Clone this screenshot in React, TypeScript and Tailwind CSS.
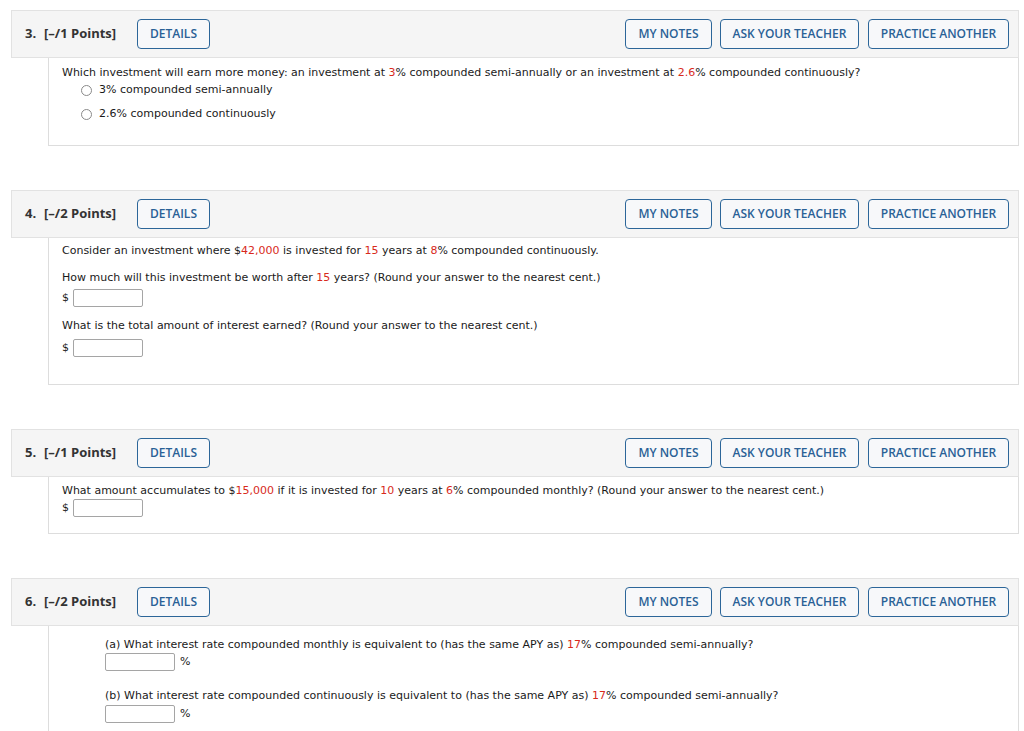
import React from "react";

const R = ({ children }: { children: React.ReactNode }) => (
  <span className="text-[#d8291c]">{children}</span>
);

const Btn = ({ label, w, className = "" }: { label: string; w: string; className?: string }) => (
  <button
    className={`${w} ${className} h-[30px] flex items-center justify-center rounded-[4px] border-[1.5px] border-[#2c6699] bg-[#f7f8fa] text-[#2a6196] text-[12px] font-semibold tracking-[0px] [font-family:'Open_Sans',sans-serif]`}
  >
    {label}
  </button>
);

const Header = ({ num, pts }: { num: string; pts: string }) => (
  <div className="h-[48px] border border-[#e2e2e2] bg-[#f5f5f5] flex items-center pl-[13px] pr-[9px]">
    <span className="[font-family:'Open_Sans',sans-serif] font-bold text-[13px] text-[#333] w-[19px]">{num}.</span>
    <span className="[font-family:'Open_Sans',sans-serif] font-bold text-[13px] text-[#333] w-[93px]">[–/{pts} Points]</span>
    <Btn label="DETAILS" w="w-[73px]" />
    <div className="flex-1" />
    <Btn label="MY NOTES" w="w-[87px]" />
    <Btn label="ASK YOUR TEACHER" w="w-[139px]" className="ml-[8px]" />
    <Btn label="PRACTICE ANOTHER" w="w-[141px]" className="ml-[9px]" />
  </div>
);

const Body = ({ className = "", children }: { className?: string; children: React.ReactNode }) => (
  <div
    className={`ml-[37px] border-x border-b border-[#dddddd] bg-white pl-[13px] text-[11px] leading-[16px] text-[#1a1a1a] [font-family:'DejaVu_Sans',Verdana,sans-serif] ${className}`}
  >
    {children}
  </div>
);

const Input = ({ w = "w-[70px]" }: { w?: string }) => (
  <span className={`inline-block ${w} h-[18px] border border-[#a5a5a5] rounded-[2px] bg-white align-middle`} />
);

const Radio = ({ label, className = "" }: { label: string; className?: string }) => (
  <div className={`flex items-center h-[18px] pl-[19px] ${className}`}>
    <span className="w-[11px] h-[11px] rounded-full border border-[#8a8a8a] bg-white" />
    <span className="ml-[7px]">{label}</span>
  </div>
);

export default function App() {
  return (
    <div className="w-[1024px] min-h-[731px] bg-white pt-[10px] pl-[11px] pr-[5px] overflow-hidden">
      {/* Q3 */}
      <section>
        <Header num="3" pts="1" />
        <Body className="pt-[7px] pb-[22px]">
          <div>
            Which investment will earn more money: an investment at <R>3</R>% compounded semi-annually or an
            investment at <R>2.6</R>% compounded continuously?
          </div>
          <Radio label="3% compounded semi-annually" />
          <Radio label="2.6% compounded continuously" className="mt-[6px]" />
        </Body>
      </section>

      {/* Q4 */}
      <section className="mt-[44px]">
        <Header num="4" pts="2" />
        <Body className="pt-[5px] pb-[27px]">
          <div>
            Consider an investment where $<R>42,000</R> is invested for <R>15</R> years at <R>8</R>% compounded
            continuously.
          </div>
          <div className="mt-[11px]">
            How much will this investment be worth after <R>15</R> years? (Round your answer to the nearest cent.)
          </div>
          <div className="mt-[3px] flex items-center gap-[4px] h-[18px]">
            <span>$</span>
            <Input />
          </div>
          <div className="mt-[11px]">What is the total amount of interest earned? (Round your answer to the nearest cent.)</div>
          <div className="mt-[5px] flex items-center gap-[4px] h-[18px]">
            <span>$</span>
            <Input />
          </div>
        </Body>
      </section>

      {/* Q5 */}
      <section className="mt-[44px]">
        <Header num="5" pts="1" />
        <Body className="pt-[6px] pb-[16px]">
          <div>
            What amount accumulates to $<R>15,000</R> if it is invested for <R>10</R> years at <R>6</R>% compounded
            monthly? (Round your answer to the nearest cent.)
          </div>
          <div className="mt-0 flex items-center gap-[4px] h-[18px]">
            <span>$</span>
            <Input />
          </div>
        </Body>
      </section>

      {/* Q6 */}
      <section className="mt-[44px]">
        <Header num="6" pts="2" />
        <Body className="pt-[11px] pb-[20px]">
          <div className="pl-[43px]">
            <div>
              (a) What interest rate compounded monthly is equivalent to (has the same APY as) <R>17</R>% compounded
              semi-annually?
            </div>
            <div className="flex items-center gap-[5px] h-[18px]">
              <Input />
              <span>%</span>
            </div>
            <div className="mt-[17px]">
              (b) What interest rate compounded continuously is equivalent to (has the same APY as) <R>17</R>%
              compounded semi-annually?
            </div>
            <div className="mt-[1px] flex items-center gap-[5px] h-[18px]">
              <Input />
              <span>%</span>
            </div>
          </div>
        </Body>
      </section>
    </div>
  );
}
